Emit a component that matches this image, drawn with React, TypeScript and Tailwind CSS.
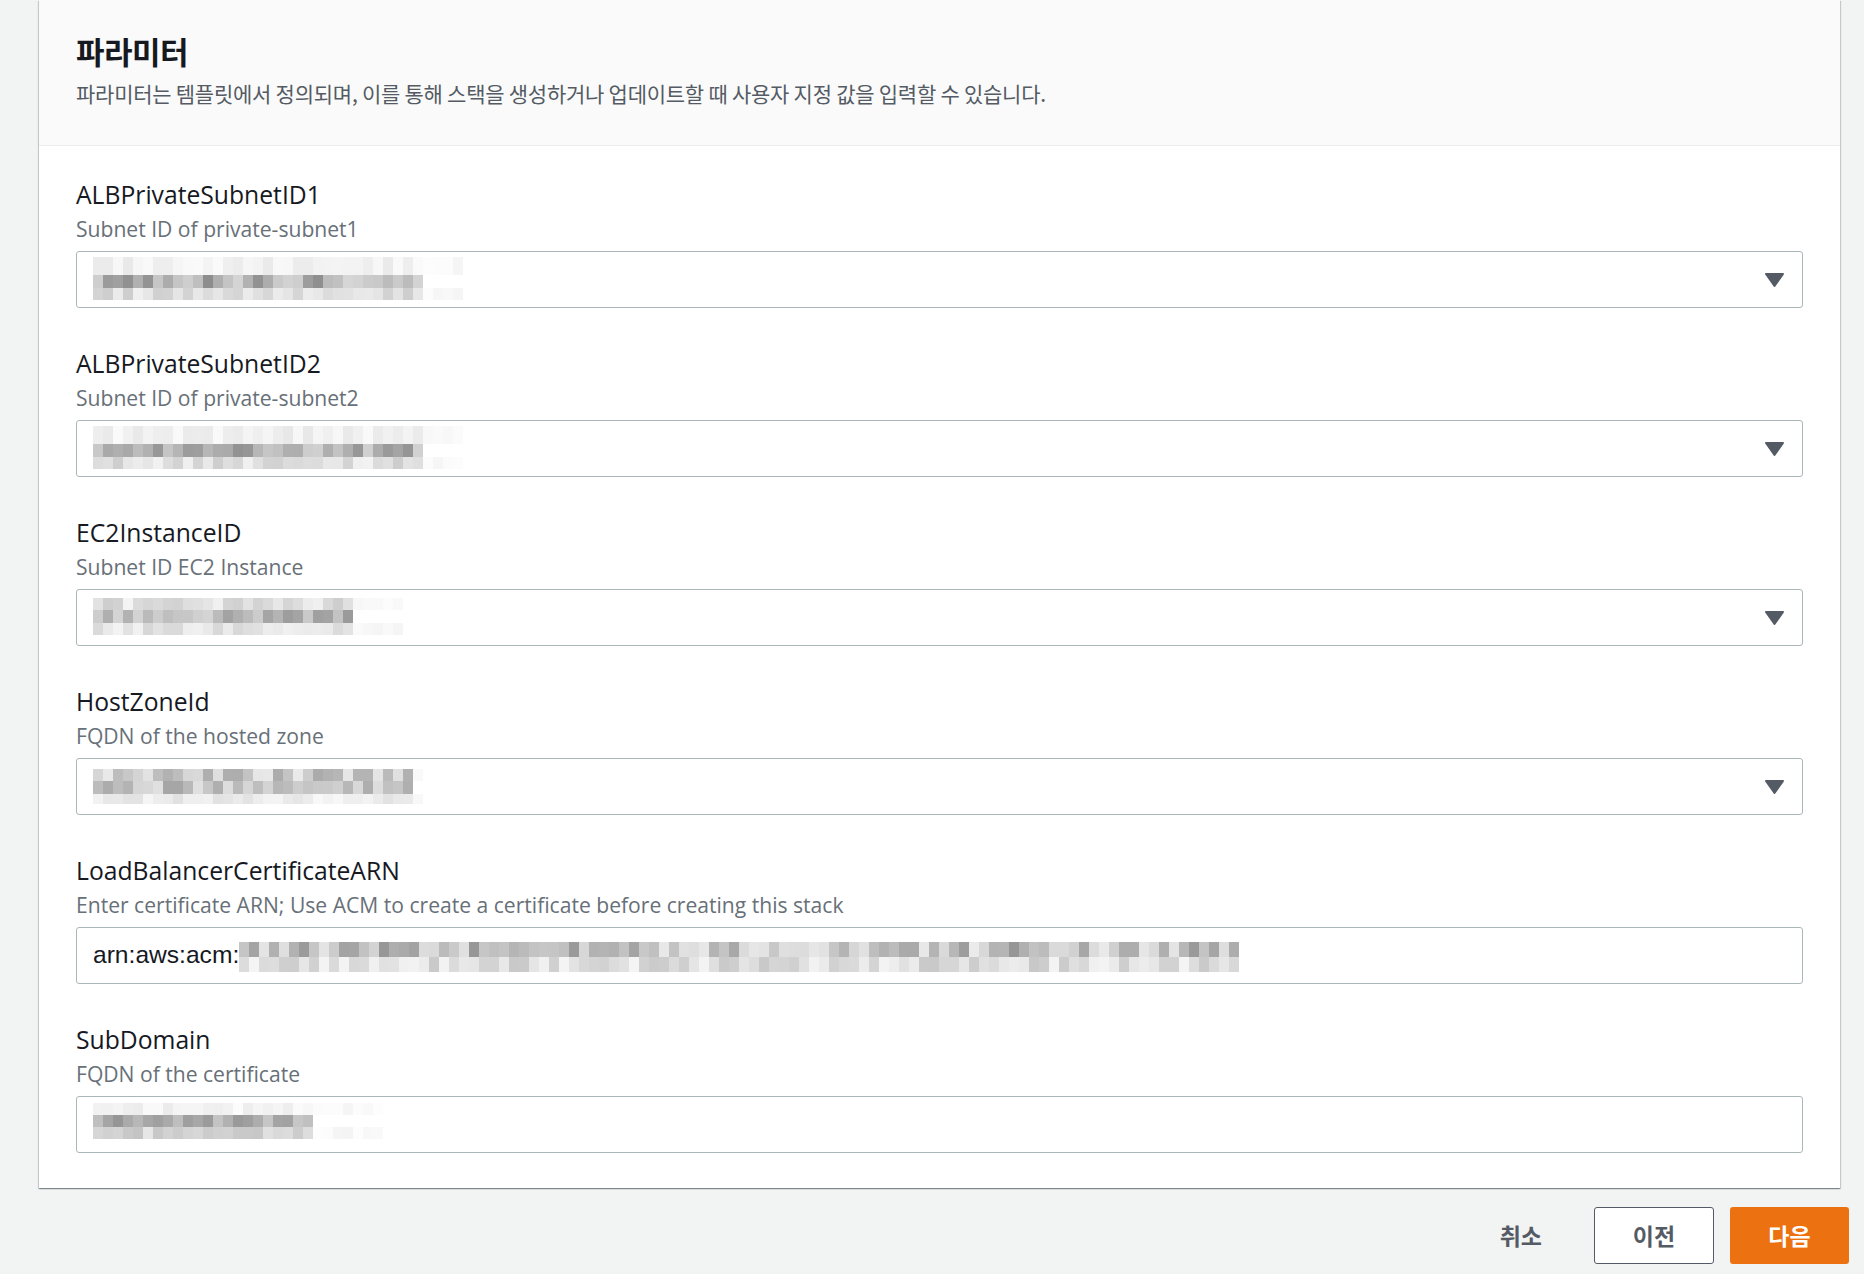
type Row = [number, number, number];

interface Param {
  name: string;
  description: string;
  kind: 'select' | 'text';
  prefix?: string;
  mosaic: { width: number; seed: number; rows: Row[]; fade?: number; top: number };
}

const params: Param[] = [
  {
    name: 'ALBPrivateSubnetID1',
    description: 'Subnet ID of private-subnet1',
    kind: 'select',
    mosaic: { width: 330, seed: 11, top: 5, fade: 4, rows: [[18, 232, 250], [13, 140, 215], [12, 205, 242]] },
  },
  {
    name: 'ALBPrivateSubnetID2',
    description: 'Subnet ID of private-subnet2',
    kind: 'select',
    mosaic: { width: 330, seed: 27, top: 5, fade: 4, rows: [[18, 232, 250], [13, 140, 210], [12, 205, 242]] },
  },
  {
    name: 'EC2InstanceID',
    description: 'Subnet ID EC2 Instance',
    kind: 'select',
    mosaic: { width: 260, seed: 43, top: 8, fade: 5, rows: [[12, 205, 245], [13, 150, 215], [12, 215, 245]] },
  },
  {
    name: 'HostZoneId',
    description: 'FQDN of the hosted zone',
    kind: 'select',
    mosaic: { width: 320, seed: 59, top: 10, fade: 1, rows: [[12, 170, 235], [13, 160, 225], [10, 225, 248]] },
  },
  {
    name: 'LoadBalancerCertificateARN',
    description: 'Enter certificate ARN; Use ACM to create a certificate before creating this stack',
    kind: 'text',
    prefix: 'arn:aws:acm:',
    mosaic: { width: 996, seed: 71, top: 14, rows: [[15, 150, 235], [15, 200, 245]] },
  },
  {
    name: 'SubDomain',
    description: 'FQDN of the certificate',
    kind: 'text',
    mosaic: { width: 220, seed: 83, top: 6, fade: 7, rows: [[12, 235, 252], [12, 150, 200], [12, 195, 230]] },
  },
];

function rng(seed: number) {
  let s = seed * 9301 + 49297;
  return () => {
    s = (s * 16807) % 2147483647;
    return s / 2147483647;
  };
}

function Mosaic({ width, seed, rows, fade = 0 }: { width: number; seed: number; rows: Row[]; fade?: number }) {
  const r = rng(seed);
  const bw = 10;
  const cols = Math.round(width / bw);
  const height = rows.reduce((a, [h]) => a + h, 0);
  const rects: { x: number; y: number; w: number; h: number; g: number }[] = [];
  let y = 0;
  rows.forEach(([h, lo, hi], ri) => {
    for (let c = 0; c < cols; c++) {
      const g = Math.round(lo + r() * (hi - lo));
      rects.push({ x: c * bw, y, w: bw, h, g });
    }
    if (ri !== 1 || rows.length === 2) {
      for (let c = 0; c < fade; c++) {
        rects.push({ x: (cols + c) * bw, y, w: bw, h, g: Math.round(244 + r() * 9) });
      }
    }
    y += h;
  });
  return (
    <svg width={(cols + fade) * bw} height={height} className="block">
      {rects.map((b, i) => (
        <rect key={i} x={b.x} y={b.y} width={b.w} height={b.h} fill={`rgb(${b.g},${b.g},${b.g + 1})`} />
      ))}
    </svg>
  );
}

function Caret() {
  return (
    <svg width="21" height="16" viewBox="0 0 21 16" className="shrink-0">
      <path d="M2 2 L19 2 L10.5 14 Z" fill="#545b64" stroke="#545b64" strokeWidth={2} strokeLinejoin="round" />
    </svg>
  );
}

function Field({ p }: { p: Param }) {
  return (
    <div>
      <div className="text-[24.7px] leading-[32px] text-[#16191f] font-['Open_Sans',sans-serif]">{p.name}</div>
      <div className="mt-[4px] text-[21.1px] leading-[28px] text-[#687078] font-['Open_Sans',sans-serif]">
        {p.description}
      </div>
      <div className="mt-[8px] h-[57px] border border-[#aab7b8] rounded-[3px] bg-white flex items-start pl-[16px] pr-[17px]">
        {p.prefix ? (
          <div className="flex items-start h-full">
            <span className="self-center text-[24.6px] text-[#16191f] font-['Liberation_Sans',Arial,sans-serif]">
              {p.prefix}
            </span>
            <div style={{ marginTop: p.mosaic.top }}>
              <Mosaic width={p.mosaic.width} seed={p.mosaic.seed} rows={p.mosaic.rows} fade={p.mosaic.fade} />
            </div>
          </div>
        ) : (
          <div style={{ marginTop: p.mosaic.top }}>
            <Mosaic width={p.mosaic.width} seed={p.mosaic.seed} rows={p.mosaic.rows} fade={p.mosaic.fade} />
          </div>
        )}
        {p.kind === 'select' && (
          <div className="ml-auto self-center">
            <Caret />
          </div>
        )}
      </div>
    </div>
  );
}

export default function App() {
  return (
    <div className="min-h-screen bg-[#f2f3f3] font-['Noto_Sans_CJK_KR',sans-serif]">
      <div className="ml-[39px] mr-[24px] bg-white shadow-[0_1px_1px_0_rgba(0,28,36,0.3),1px_1px_1px_0_rgba(0,28,36,0.15),-1px_1px_1px_0_rgba(0,28,36,0.15)]">
        {/* 헤더 */}
        <div className="bg-[#fafafa] border-b border-[#eaeded] px-[37px] pt-[32px] pb-[38px]">
          <h2 className="text-[31px] leading-[38px] font-bold text-[#16191f] tracking-[-0.5px]">파라미터</h2>
          <p className="mt-[9px] text-[21px] leading-[28px] text-[#545b64] tracking-[-0.25px]">
            파라미터는 템플릿에서 정의되며, 이를 통해 스택을 생성하거나 업데이트할 때 사용자 지정 값을 입력할 수 있습니다.
          </p>
        </div>

        {/* 필드 */}
        <div className="px-[37px] pt-[33px] pb-[35px] flex flex-col gap-[40px]">
          {params.map((p) => (
            <Field key={p.name} p={p} />
          ))}
        </div>
      </div>

      {/* 버튼 */}
      <div className="flex justify-end items-center gap-[16px] pt-[19px] pr-[15px] pb-[9px]">
        <button className="h-[57px] px-[20px] mr-[16px] text-[23px] font-bold text-[#545b64]">취소</button>
        <button className="h-[57px] w-[120px] border border-[#545b64] rounded-[3px] bg-white text-[23px] font-bold text-[#545b64]">
          이전
        </button>
        <button className="h-[57px] w-[119px] rounded-[3px] bg-[#ec7211] text-[23px] font-bold text-white">다음</button>
      </div>
    </div>
  );
}
